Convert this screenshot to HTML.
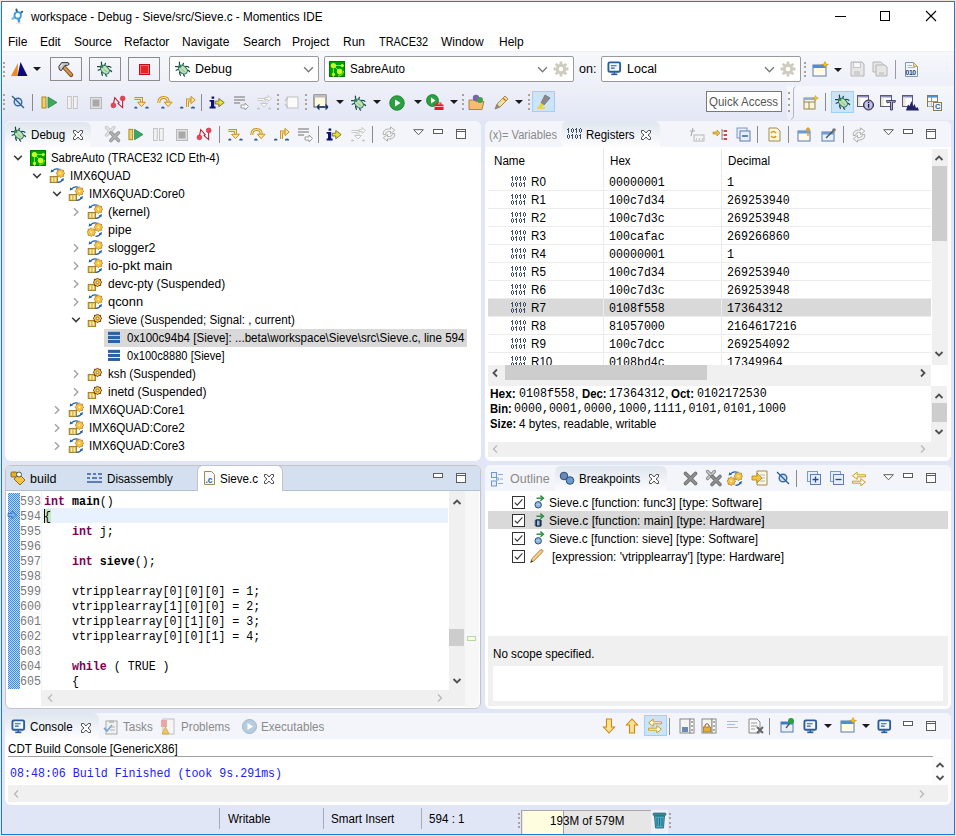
<!DOCTYPE html>
<html><head><meta charset="utf-8">
<style>
*{box-sizing:border-box}
html,body{margin:0;padding:0}
body{width:956px;height:836px;position:relative;overflow:hidden;background:#ebe6df;font-family:"Liberation Sans",sans-serif;font-size:12px;color:#000}
.a{position:absolute}
svg.a{overflow:visible}
.t{position:absolute;white-space:nowrap;line-height:14px;transform-origin:0 0}
.n{transform:scaleX(.93)}
.m{font-family:"Liberation Mono",monospace}
.mc{font-family:"Liberation Mono",monospace;font-size:12.5px;transform:scaleX(.93)}
#win{left:1px;top:1px;width:954px;height:834px;border:1px solid #1a7ad4;background:#e1e6f6}
.panel{position:absolute;background:#fff;border-radius:6px;overflow:hidden}
.tabbar{position:absolute;left:0;top:0;right:0;height:26px;background:#f3f5fa}
.tabsel{position:absolute;top:0;height:26px;background:linear-gradient(#dfe6ee,#fdfdfe);border-radius:6px 6px 0 0}
.box{position:absolute;border:1px solid #8c8c8c}
.combo{position:absolute;border:1px solid #9a9a9a;background:#fff;border-radius:2px}
.dd{position:absolute;width:0;height:0;border-left:4px solid transparent;border-right:4px solid transparent;border-top:4px solid #1a1a1a}
.grip{position:absolute;width:2px;background:repeating-linear-gradient(#a8a49a 0 2px,transparent 2px 4.5px)}
.mini{position:absolute;width:10px;height:5px;border:1px solid #5c5c5c;background:#fff}
.maxi{position:absolute;width:10px;height:10px;border:1px solid #5c5c5c;background:#fff;box-shadow:inset 0 1px 0 #fff,inset 0 2px 0 #5c5c5c}
.sep{position:absolute;width:1px;background:#8a8a8a}
</style></head><body>
<div id="win" class="a"></div>
<!-- title/menu bg -->
<div class="a" style="left:2px;top:2px;width:952px;height:49px;background:#fff"></div>
<div class="a" style="left:2px;top:51px;width:952px;height:1px;background:#f0f0f0"></div>
<div class="a" style="left:2px;top:52px;width:952px;height:69px;background:linear-gradient(#f7f8fc,#e3e7f5)"></div>
<!-- ===== TITLE BAR ===== -->
<svg class="a" style="left:8px;top:5px" width="22" height="22" viewBox="0 0 22 22"><path d="M8.4 4.5L9.4 8M14.2 6.7L11.8 8.5" stroke="#3a5872" stroke-width="2" stroke-linecap="round"/><path d="M4.5 13.8L7.5 11.5" stroke="#8cc4ee" stroke-width="2.6" stroke-linecap="round"/><path d="M11 16.5L10.6 13.5" stroke="#4a9ae0" stroke-width="2.6" stroke-linecap="round"/><circle cx="9.7" cy="10.4" r="3.2" fill="#fff" stroke="#3a9ae2" stroke-width="1.8"/><ellipse cx="10.5" cy="18.5" rx="3" ry="0.8" fill="#e4e4e4"/></svg>
<div class="t" style="left:31px;top:10px;font-size:12px;transform:scaleX(.978)">workspace - Debug - Sieve/src/Sieve.c - Momentics IDE</div>
<div class="a" style="left:835px;top:16px;width:11px;height:1px;background:#000"></div>
<div class="a" style="left:880px;top:11px;width:10px;height:10px;border:1px solid #000"></div>
<svg class="a" style="left:925px;top:10px" width="12" height="12" viewBox="0 0 12 12"><path d="M1 1L11 11M11 1L1 11" stroke="#000" stroke-width="1.1"/></svg>
<!-- ===== MENU ===== -->
<div class="t" style="left:8px;top:35px">File</div>
<div class="t" style="left:40px;top:35px">Edit</div>
<div class="t" style="left:74px;top:35px">Source</div>
<div class="t" style="left:124px;top:35px">Refactor</div>
<div class="t" style="left:182px;top:35px">Navigate</div>
<div class="t" style="left:243px;top:35px">Search</div>
<div class="t" style="left:292px;top:35px">Project</div>
<div class="t" style="left:343px;top:35px">Run</div>
<div class="t" style="left:379px;top:35px;transform:scaleX(.91)">TRACE32</div>
<div class="t" style="left:441px;top:35px">Window</div>
<div class="t" style="left:499px;top:35px">Help</div>
<svg width="0" height="0" style="position:absolute">
<defs>
<symbol id="bug" viewBox="0 0 16 16"><g stroke="#1c4a3c" stroke-width="1.25" stroke-linecap="round" fill="none"><path d="M4.4 1.1L4.6 4M8.4 2.4L7.4 5M0.4 5.5H3.5M10.5 5.3L12.6 5.5L13.8 6.3M1.2 9.3L3.5 8.3M12.2 9.1L13.6 9.5L14.5 10.5M4.6 11.4L4.9 13L5.4 14.3M8.6 13L8.8 14.3L9.6 15.2"/></g><ellipse cx="7.9" cy="8.6" rx="3.6" ry="5.1" transform="rotate(-45 7.9 8.6)" fill="#bfe0b0" stroke="#226a70" stroke-width="1"/><path d="M6.5 8.2L10 11" stroke="#8cc080" stroke-width="1"/><circle cx="4.8" cy="5.4" r="1.4" fill="#3e8a50" stroke="#226a70" stroke-width=".6"/></symbol>
<symbol id="gear" viewBox="0 0 16 16"><g fill="#cfcbbf"><circle cx="8" cy="8" r="5.2"/><rect x="6.6" y="0.5" width="2.8" height="15" rx="0.6"/><rect x="0.5" y="6.6" width="15" height="2.8" rx="0.6"/><rect x="6.6" y="0.5" width="2.8" height="15" rx="0.6" transform="rotate(45 8 8)"/><rect x="6.6" y="0.5" width="2.8" height="15" rx="0.6" transform="rotate(-45 8 8)"/></g><circle cx="8" cy="8" r="2.3" fill="#fff"/></symbol>
<symbol id="chev" viewBox="0 0 12 8"><path d="M1 1.5L6 6.5L11 1.5" fill="none" stroke="#7a7a7a" stroke-width="1.6"/></symbol>
<symbol id="mon" viewBox="0 0 16 16"><rect x="1.5" y="1.5" width="12.5" height="10" rx="1.5" fill="#f4f8fc" stroke="#2b5c9c" stroke-width="2"/><path d="M4.2 5h6M4.2 7.6h4" stroke="#2b5c9c" stroke-width="1.2"/><path d="M4.5 14.2h6.5" stroke="#2b5c9c" stroke-width="1.8"/><path d="M7.75 12v2" stroke="#2b5c9c" stroke-width="1.5"/></symbol>
<symbol id="sabre" viewBox="0 0 16 16"><rect x="0" y="0" width="16" height="16" fill="#007a00"/><rect x="1" y="1" width="14" height="14" fill="#00a000"/><path d="M4.4 4.5H15M4.4 4.5V16M4.4 4.5L10.6 10.5" stroke="#66ff22" stroke-width="1"/><path d="M9 15Q14 15 14.5 10" fill="none" stroke="#77ff33" stroke-width="1"/><circle cx="4.4" cy="4.5" r="2.6" fill="#c6ff2a"/><circle cx="10.6" cy="10.6" r="2.8" fill="#c6ff2a"/><circle cx="13.2" cy="4.6" r="1.6" fill="#b8ff30"/><circle cx="4.5" cy="13.4" r="1.6" fill="#b8ff30"/></symbol>
<symbol id="proc" viewBox="0 0 17 16"><rect x="1.2" y="9.4" width="7.4" height="6.2" fill="#d9b445" stroke="#9a7a22" stroke-width=".9"/><rect x="2.6" y="10.6" width="1.6" height="4" fill="#fbeeb0"/><rect x="5.6" y="10.6" width="1.6" height="4" fill="#fbeeb0"/><path d="M15.90,6.30 L14.45,7.56 L14.58,9.48 L12.66,9.35 L11.40,10.80 L10.14,9.35 L8.22,9.48 L8.35,7.56 L6.90,6.30 L8.35,5.04 L8.22,3.12 L10.14,3.25 L11.40,1.80 L12.66,3.25 L14.58,3.12 L14.45,5.04Z" fill="#f7c23a" stroke="#a8782a" stroke-width=".7"/><circle cx="11.4" cy="6.3" r="1" fill="#fff6d0"/><path d="M10.5 2.3Q6.5 0.8 3.6 3.8" fill="none" stroke="#1f5ea8" stroke-width="1.2"/><path d="M1.6 5.4L2.4 2.2L5 4.4Z" fill="#1f5ea8"/><path d="M8.5 15.3Q12 15.5 13.6 12.6" fill="none" stroke="#1f5ea8" stroke-width="1.2"/><path d="M15 11L11.8 12.4L14.3 14.3Z" fill="#1f5ea8"/></symbol>
<symbol id="procs" viewBox="0 0 17 16"><rect x="1.2" y="9.4" width="7.4" height="6.2" fill="#d9b445" stroke="#9a7a22" stroke-width=".9"/><rect x="2.6" y="10.6" width="1.6" height="4" fill="#fbeeb0"/><rect x="5.6" y="10.6" width="1.6" height="4" fill="#fbeeb0"/><path d="M15.00,7.40 L13.55,8.66 L13.68,10.58 L11.76,10.45 L10.50,11.90 L9.24,10.45 L7.32,10.58 L7.45,8.66 L6.00,7.40 L7.45,6.14 L7.32,4.22 L9.24,4.35 L10.50,2.90 L11.76,4.35 L13.68,4.22 L13.55,6.14Z" fill="#f7c23a" stroke="#5a3a12" stroke-width=".9"/><circle cx="10.5" cy="7.4" r="1.3" fill="#fff" stroke="#5a3a12" stroke-width=".6"/></symbol>
<symbol id="proc2" viewBox="0 0 17 16"><path d="M8.70,11.20 L7.25,12.46 L7.38,14.38 L5.46,14.25 L4.20,15.70 L2.94,14.25 L1.02,14.38 L1.15,12.46 L-0.30,11.20 L1.15,9.94 L1.02,8.02 L2.94,8.15 L4.20,6.70 L5.46,8.15 L7.38,8.02 L7.25,9.94Z" fill="#f7c23a" stroke="#a8782a" stroke-width=".7"/><circle cx="4.2" cy="11.2" r="1" fill="#fff6d0"/><path d="M15.90,6.30 L14.45,7.56 L14.58,9.48 L12.66,9.35 L11.40,10.80 L10.14,9.35 L8.22,9.48 L8.35,7.56 L6.90,6.30 L8.35,5.04 L8.22,3.12 L10.14,3.25 L11.40,1.80 L12.66,3.25 L14.58,3.12 L14.45,5.04Z" fill="#f7c23a" stroke="#a8782a" stroke-width=".7"/><circle cx="11.4" cy="6.3" r="1" fill="#fff6d0"/><path d="M10.5 2.3Q6.5 0.8 3.6 3.8" fill="none" stroke="#1f5ea8" stroke-width="1.2"/><path d="M1.6 5.4L2.4 2.2L5 4.4Z" fill="#1f5ea8"/><path d="M8.5 15.3Q12 15.5 13.6 12.6" fill="none" stroke="#1f5ea8" stroke-width="1.2"/><path d="M15 11L11.8 12.4L14.3 14.3Z" fill="#1f5ea8"/></symbol>
<symbol id="frame" viewBox="0 0 14 16"><g fill="#2a64aa"><rect x="1" y="1.8" width="12" height="2.8"/><rect x="1" y="5.9" width="12" height="2.8"/><rect x="1" y="9.9" width="12" height="2.8"/></g><g fill="#1e5090"><rect x="1" y="3.8" width="12" height=".8"/><rect x="1" y="7.9" width="12" height=".8"/><rect x="1" y="11.9" width="12" height=".8"/></g></symbol>
<symbol id="bin" viewBox="0 0 16 15"><g fill="#3c4c68" shape-rendering="crispEdges"><path d="M2 1h1v5h-1zM1 2h1v1h-1z"/><path d="M5 2h1v3h-1zM7 2h1v3h-1zM6 1h1v1h-1zM6 5h1v1h-1z"/><path d="M10 1h1v5h-1zM9 2h1v1h-1z"/><path d="M13 2h1v3h-1zM15 2h1v3h-1zM14 1h1v1h-1zM14 5h1v1h-1z"/><path d="M1 8h1v3h-1zM3 8h1v3h-1zM2 7h1v1h-1zM2 11h1v1h-1z"/><path d="M6 7h1v5h-1zM5 8h1v1h-1z"/><path d="M9 8h1v3h-1zM11 8h1v3h-1zM10 7h1v1h-1zM10 11h1v1h-1z"/><path d="M14 7h1v5h-1zM13 8h1v1h-1z"/></g></symbol>
<symbol id="xclose" viewBox="0 0 12 12"><path d="M1.5 1.5H3.8L6 4L8.2 1.5H10.5V3.8L8 6L10.5 8.2V10.5H8.2L6 8L3.8 10.5H1.5V8.2L4 6L1.5 3.8Z" fill="#fff" stroke="#505050" stroke-width="1"/></symbol>
<symbol id="menu" viewBox="0 0 11 7"><path d="M0.7 0.7h9.6L5.5 5.8Z" fill="#fff" stroke="#5c5c5c" stroke-width="1"/></symbol>
<symbol id="mini" viewBox="0 0 12 6"><rect x="1" y="1" width="10" height="4" fill="#fff" stroke="#444" stroke-width="1.2"/></symbol>
<symbol id="maxi" viewBox="0 0 12 12"><rect x="1" y="1" width="10" height="10" fill="#fff" stroke="#444" stroke-width="1.2"/><path d="M1 3.2h10" stroke="#444" stroke-width="1.2"/></symbol>
<symbol id="refresh" viewBox="0 0 16 16"><path d="M3 9Q2 3 9 3L9 1L13 4.5L9 8L9 6Q5 6 5 9Z" fill="#ddd" stroke="#999" stroke-width=".9"/><path d="M13 7Q14 13 7 13L7 15L3 11.5L7 8L7 10Q11 10 11 7Z" fill="#ddd" stroke="#999" stroke-width=".9"/></symbol>
<symbol id="chk" viewBox="0 0 14 14"><rect x="0.5" y="0.5" width="12" height="12" fill="#fff" stroke="#333" stroke-width="1"/><path d="M2.8 6.6L5.2 9.2L10.4 3.4" fill="none" stroke="#3a3a3a" stroke-width="1.2"/></symbol>
<symbol id="tarrow" viewBox="0 0 10 10"><path d="M3 1.2L6.8 5L3 8.8" fill="none" stroke="#a4a4a4" stroke-width="1.5"/></symbol>
<symbol id="darrow" viewBox="0 0 10 10"><path d="M1.2 2.8L5 6.6L8.8 2.8" fill="none" stroke="#3c3c3c" stroke-width="1.6"/></symbol>
<symbol id="disc" viewBox="0 0 16 15"><path d="M3.4 9L4.8 2.6L9.2 7.6L8 8.6L12.6 12.6L12.7 5" fill="none" stroke="#b8202e" stroke-width="1.1"/><circle cx="3.4" cy="10.4" r="2.4" fill="#ec4453" stroke="#c02a38" stroke-width=".6"/><circle cx="12.7" cy="3.4" r="2.4" fill="#ec4453" stroke="#c02a38" stroke-width=".6"/></symbol>
<symbol id="sinto" viewBox="0 0 17 15"><path d="M1.5 3.5H8.5V8" fill="none" stroke="#c8901a" stroke-width="3"/><path d="M1.5 3.5H8.5V8" fill="none" stroke="#fde9a8" stroke-width="1.2"/><path d="M4.6 7.2H12.4L8.5 11.6Z" fill="#fde9a8" stroke="#c8901a" stroke-width="1"/><path d="M1.3 13.6V12.6Q2.8 10.4 4.3 12.6V13.6ZM12.3 13.6V12.6Q14 10.4 15.7 12.6V13.6Z" fill="#2c5a8c"/></symbol>
<symbol id="sover" viewBox="0 0 17 15"><path d="M1.8 8Q1.8 2.5 6.5 2.5Q11.2 2.5 11.2 7" fill="none" stroke="#c8901a" stroke-width="3"/><path d="M1.8 8Q1.8 2.5 6.5 2.5Q11.2 2.5 11.2 7" fill="none" stroke="#fde9a8" stroke-width="1.2"/><path d="M7.3 7.2H15.1L11.2 11.6Z" fill="#fde9a8" stroke="#c8901a" stroke-width="1"/><path d="M4.2 13.6V12.6Q5.9 10.4 7.6 12.6V13.6Z" fill="#2c5a8c"/></symbol>
<symbol id="sret" viewBox="0 0 17 15"><path d="M8.5 12V5H12.5" fill="none" stroke="#c8901a" stroke-width="3"/><path d="M8.5 12V5H12.5" fill="none" stroke="#fde9a8" stroke-width="1.2"/><path d="M12 1.4V8.6L16.2 5Z" fill="#fde9a8" stroke="#c8901a" stroke-width="1"/><path d="M1 13.6V12.6Q2.7 10.4 4.4 12.6V13.6ZM12 13.6V12.6Q14 10.4 16 12.6V13.6Z" fill="#2c5a8c"/></symbol>
<symbol id="iarr" viewBox="0 0 16 13"><path d="M2.6 0.4h2.6v2.4H2.6Z M0.6 4h4.6v6.6h1.4v1.8H0.6v-1.8h1.4V5.8H0.6Z" fill="#10107a"/><path d="M6.2 5.2h3.6V2.4L15.2 6.6L9.8 10.8V8H6.2Z" fill="#e6dc3c" stroke="#6a6418" stroke-width=".8"/></symbol>
<symbol id="dsel" viewBox="0 0 16 15"><path d="M1.5 4.5H8V9" fill="none" stroke="#c8c8c8" stroke-width="2.8"/><path d="M1.5 4.5H8V9" fill="none" stroke="#fafafa" stroke-width="1"/><path d="M4.5 8.5H11.5L8 12Z" fill="#fafafa" stroke="#c4c4c4" stroke-width=".9"/><path d="M9 2.5H12V0.5L15.5 3.5L12 6.5V4.5H9Z" fill="#fafafa" stroke="#c4c4c4" stroke-width=".9"/><path d="M1 14.2V13.4Q2.5 11.6 4 13.4V14.2ZM12 14.2V13.4Q13.5 11.6 15 13.4V14.2Z" fill="#c4c4c4"/></symbol>
<symbol id="refr" viewBox="0 0 16 16"><path d="M2.2 8.5Q1.8 3.2 7.5 3H9.5V0.8L13.8 4.2L9.5 7.6V5.4H7.5Q4.4 5.6 4.6 8.5Z" fill="#f4f4f4" stroke="#a8a8a8" stroke-width=".9"/><path d="M13.8 7.5Q14.2 12.8 8.5 13H6.5V15.2L2.2 11.8L6.5 8.4V10.6H8.5Q11.6 10.4 11.4 7.5Z" fill="#f4f4f4" stroke="#a8a8a8" stroke-width=".9"/></symbol>
<symbol id="link" viewBox="0 0 16 16"><path d="M14.5 4.8H6.2V2.2L1.6 5.8L6.2 9.4V6.8H14.5Z" fill="#fffdf2" stroke="#d09a20" stroke-width="1" stroke-linejoin="round"/><path d="M1.5 11.2H9.8V8.6L14.4 12.2L9.8 15.8V13.2H1.5Z" fill="#fffdf2" stroke="#d09a20" stroke-width="1" stroke-linejoin="round"/></symbol>
</defs></svg>

<!-- ===== TOOLBAR ROW 1 ===== -->
<div class="grip" style="left:3px;top:62px;height:16px"></div>
<svg class="a" style="left:11px;top:62px" width="17" height="15" viewBox="0 0 17 15"><path d="M0 14L7 1L6.5 14Z" fill="#f08a20"/><path d="M6.5 14L9.5 0L16.5 14Z" fill="#0a0a7a"/></svg>
<div class="dd" style="left:33px;top:67px"></div>
<div class="box" style="left:50px;top:57px;width:32px;height:24px"></div>
<svg class="a" style="left:58px;top:61px" width="16" height="16" viewBox="0 0 16 16"><path d="M6.4 6.6L13.2 14" stroke="#8a5418" stroke-width="4.2" stroke-linecap="round"/><path d="M6.6 6.8L13 13.8" stroke="#d49a58" stroke-width="2.2" stroke-linecap="round"/><path d="M3.6 1.6H10.2L11.2 3.2L9.6 4.4H7L5.4 6.4L3.4 9.6L1.4 8.8L0.8 5.6Z" fill="#c8c8c8" stroke="#343434" stroke-width="1" stroke-linejoin="round"/><path d="M4 3.5L2.5 6" stroke="#f0f0f0" stroke-width="1"/></svg>
<div class="box" style="left:89px;top:57px;width:32px;height:24px"></div>
<svg class="a" style="left:97px;top:61px" width="16" height="16"><use href="#bug"/></svg>
<div class="box" style="left:128px;top:57px;width:32px;height:24px"></div>
<div class="a" style="left:139px;top:64px;width:11px;height:11px;background:#e8202a;border:1px solid #c01018;box-shadow:inset 0 0 0 1px #ff6a70"></div>

<div class="combo" style="left:169px;top:56px;width:150px;height:26px"></div>
<svg class="a" style="left:175px;top:61px" width="16" height="16"><use href="#bug"/></svg>
<div class="t" style="left:195px;top:62px;font-size:12.5px">Debug</div>
<svg class="a" style="left:303px;top:66px" width="11" height="7"><use href="#chev"/></svg>

<div class="combo" style="left:324px;top:56px;width:250px;height:26px"></div>
<svg class="a" style="left:329px;top:61px" width="16" height="16"><use href="#sabre"/></svg>
<div class="t n" style="left:350px;top:62px;font-size:12.5px">SabreAuto</div>
<svg class="a" style="left:537px;top:66px" width="11" height="7"><use href="#chev"/></svg>
<svg class="a" style="left:553px;top:61px" width="16" height="16"><use href="#gear"/></svg>
<div class="t" style="left:579px;top:62px;font-size:12.5px">on:</div>

<div class="combo" style="left:601px;top:56px;width:200px;height:26px"></div>
<svg class="a" style="left:607px;top:61px" width="15" height="15"><use href="#mon"/></svg>
<div class="t" style="left:627px;top:62px;font-size:12.5px">Local</div>
<svg class="a" style="left:764px;top:66px" width="11" height="7"><use href="#chev"/></svg>
<svg class="a" style="left:780px;top:61px" width="16" height="16"><use href="#gear"/></svg>

<div class="grip" style="left:804px;top:62px;height:17px"></div>
<svg class="a" style="left:812px;top:61px" width="17" height="16" viewBox="0 0 17 16"><rect x="1" y="4" width="13" height="11" fill="#fffbe8" stroke="#5a7ca8" stroke-width="1"/><rect x="1" y="4" width="13" height="3" fill="#4a8fd8"/><path d="M13 0.5L14 3L16.5 3.5L14 4.5L13 7L12 4.5L9.5 3.5L12 3Z" fill="#f5c518" stroke="#b8860b" stroke-width=".5"/></svg>
<div class="dd" style="left:834px;top:68px"></div>
<svg class="a" style="left:850px;top:61px" width="15" height="16" viewBox="0 0 15 16"><path d="M1 1h11l2 2v12H1Z" fill="#e6e6e6" stroke="#b4b4b4"/><rect x="3.5" y="1.5" width="7" height="5" fill="#f6f6f6" stroke="#bbb" stroke-width=".8"/><rect x="4" y="10" width="6" height="5" fill="#cfcfcf"/></svg>
<svg class="a" style="left:872px;top:61px" width="16" height="16" viewBox="0 0 16 16"><path d="M1 1h8l2 2v8H1Z" fill="#e6e6e6" stroke="#b4b4b4"/><path d="M4 4h9l2 2v9H4Z" fill="#e6e6e6" stroke="#b4b4b4"/><rect x="7" y="11" width="5" height="4" fill="#cfcfcf"/></svg>
<div class="sep" style="left:895px;top:60px;height:19px;background:#9a9a9a"></div>
<svg class="a" style="left:904px;top:61px" width="15" height="16" viewBox="0 0 15 16"><path d="M1.5 1.5H9.5L13.5 5.5V15.5H1.5Z" fill="#f4f8fc" stroke="#7c94b8" stroke-width="1"/><path d="M9.5 1.5V5.5H13.5Z" fill="#f0d890" stroke="#b89a50" stroke-width=".8"/><path d="M3.5 4.5H8M3.5 6.5H11" stroke="#a8b8d0" stroke-width="1"/><text x="1.6" y="14.4" font-family="Liberation Sans" font-weight="bold" font-size="6.8" fill="#1a3a78" letter-spacing="-.4">010</text></svg>

<!-- ===== TOOLBAR ROW 2 ===== -->
<div class="grip" style="left:3px;top:94px;height:16px"></div>
<svg class="a" style="left:11px;top:95px" width="14" height="14" viewBox="0 0 14 14"><circle cx="7" cy="7" r="3.8" fill="#cfe0f0" stroke="#3a6aa8" stroke-width="1.4"/><path d="M1 1L13 13" stroke="#2a5a98" stroke-width="1.3"/></svg>
<div class="sep" style="left:32px;top:94px;height:17px"></div>
<svg class="a" style="left:41px;top:96px" width="17" height="13" viewBox="0 0 17 13"><rect x="1" y="1" width="4" height="11" fill="#f0d060" stroke="#a88a20" stroke-width="1"/><path d="M7 1L16 6.5L7 12Z" fill="#3aa860" stroke="#2a8a48" stroke-width=".8"/></svg>
<svg class="a" style="left:67px;top:96px" width="11" height="13" viewBox="0 0 11 13"><rect x="0.5" y="0.5" width="3.8" height="12" fill="#f2f2f2" stroke="#c4c4c4"/><rect x="6.5" y="0.5" width="3.8" height="12" fill="#f2f2f2" stroke="#c4c4c4"/></svg>
<svg class="a" style="left:90px;top:97px" width="12" height="12" viewBox="0 0 12 12"><rect x="0.5" y="0.5" width="11" height="11" fill="#e2e2e2" stroke="#b8b8b8"/><rect x="2.5" y="2.5" width="7" height="7" fill="#a8a8a8"/></svg>
<svg class="a" style="left:110px;top:95px" width="16" height="15"><use href="#disc"/></svg>
<svg class="a" style="left:133px;top:95px" width="17" height="15"><use href="#sinto"/></svg>
<svg class="a" style="left:157px;top:95px" width="17" height="15"><use href="#sover"/></svg>
<svg class="a" style="left:179px;top:95px" width="17" height="15"><use href="#sret"/></svg>
<div class="sep" style="left:201px;top:94px;height:17px"></div>
<svg class="a" style="left:209px;top:96px" width="16" height="13"><use href="#iarr"/></svg>
<svg class="a" style="left:233px;top:95px" width="16" height="16" viewBox="0 0 16 16"><path d="M1 2h11M1 5h11M1 8h6" stroke="#9a9a9a" stroke-width="1.6"/><path d="M8 10h4V8l3.5 3.5L12 15v-2H8Z" fill="#fff" stroke="#9a9a9a" stroke-width="1"/></svg>
<svg class="a" style="left:256px;top:95px" width="16" height="15"><use href="#dsel"/></svg>
<div class="grip" style="left:277px;top:94px;height:17px"></div>
<svg class="a" style="left:284px;top:96px" width="15" height="13" viewBox="0 0 15 13"><rect x="3" y="1" width="11" height="11" fill="#fafafa" stroke="#c0c0c0"/><path d="M1 5l3-3M1 8l3 3" stroke="#c0c0c0" stroke-width="1.2"/></svg>
<div class="grip" style="left:305px;top:94px;height:17px"></div>
<svg class="a" style="left:313px;top:94px" width="17" height="17" viewBox="0 0 17 17"><rect x="1" y="1" width="12" height="12" fill="#fdf8e0" stroke="#555" stroke-width="1"/><rect x="1" y="1" width="12" height="2.5" fill="#bbb"/><path d="M4 13h11M4 13l2.5-2.5M4 13l2.5 2.5M15 13l-2.5-2.5M15 13l-2.5 2.5" stroke="#1a3060" stroke-width="1.3" fill="none"/></svg>
<div class="dd" style="left:336px;top:100px"></div>
<svg class="a" style="left:351px;top:95px" width="16" height="16"><use href="#bug"/></svg>
<div class="dd" style="left:373px;top:100px"></div>
<svg class="a" style="left:389px;top:95px" width="16" height="16" viewBox="0 0 16 16"><circle cx="8" cy="8" r="7.3" fill="#2aa040" stroke="#1a7a2a" stroke-width=".8"/><path d="M6 4.5L11.5 8L6 11.5Z" fill="#fff"/></svg>
<div class="dd" style="left:414px;top:100px"></div>
<svg class="a" style="left:426px;top:94px" width="18" height="17" viewBox="0 0 18 17"><circle cx="6.5" cy="6.5" r="6" fill="#2aa040" stroke="#1a7a2a" stroke-width=".8"/><path d="M5 3.5L9.5 6.5L5 9.5Z" fill="#fff"/><rect x="8.5" y="10.5" width="9" height="5.5" fill="#e02020"/><rect x="11" y="9" width="4" height="2" fill="none" stroke="#e02020" stroke-width="1"/><path d="M8.5 12.5h9" stroke="#fff" stroke-width=".7"/></svg>
<div class="dd" style="left:450px;top:100px"></div>
<div class="grip" style="left:462px;top:94px;height:17px"></div>
<svg class="a" style="left:468px;top:94px" width="18" height="17" viewBox="0 0 18 17"><path d="M1 6h6l1 1.5h8l-2 8H1Z" fill="#f0c070" stroke="#b07a20" stroke-width=".9"/><circle cx="8" cy="4" r="3.2" fill="#7a60b0"/><circle cx="12" cy="6" r="3" fill="#40a050"/></svg>
<svg class="a" style="left:493px;top:94px" width="16" height="17" viewBox="0 0 16 17"><path d="M2 15L4 10L12 2L15 5L7 13Z" fill="#f0e0a0" stroke="#a08040" stroke-width=".9"/><path d="M2 15L4 10L7 13Z" fill="#888"/><path d="M10 4l3 3" stroke="#d08020" stroke-width="1.5"/></svg>
<div class="dd" style="left:515px;top:100px"></div>
<div class="grip" style="left:528px;top:94px;height:17px"></div>
<div class="a" style="left:532px;top:91px;width:23px;height:21px;background:#cce4f7;border:1px solid #99d1ff"></div>
<svg class="a" style="left:536px;top:93px" width="16" height="16" viewBox="0 0 16 16"><path d="M9 2L14 5L8 12L5 10Z" fill="#8a8a8a" stroke="#666" stroke-width=".7"/><path d="M5 10L8 12L6 14L2 14.5Z" fill="#f5d020"/><path d="M1 15h8" stroke="#f5d020" stroke-width="1.5"/></svg>

<div class="a" style="left:706px;top:91px;width:76px;height:21px;background:#fff;border:1px solid #7a7a7a"></div>
<div class="t" style="left:709px;top:95px;font-size:12.5px;color:#555;transform:scaleX(.92)">Quick Access</div>
<div class="a" style="left:787px;top:86px;width:167px;height:34px;background:linear-gradient(#f6f7fc,#eceff8)"></div>
<div class="a" style="left:788px;top:92px;width:2px;height:21px;background:repeating-linear-gradient(#a8a290 0 2px,transparent 2px 6px)"></div>
<svg class="a" style="left:790px;top:86px" width="8" height="34" viewBox="0 0 8 34"><path d="M5.5 0.5Q3.5 1.5 3.5 4V30Q3.5 32.5 1 33.5" fill="none" stroke="#b4b8c6" stroke-width="1"/></svg>
<svg class="a" style="left:803px;top:95px" width="16" height="15" viewBox="0 0 16 15"><rect x="1" y="3" width="11" height="11" fill="#fdf4d8" stroke="#8a7a4a" stroke-width=".9"/><path d="M1 7h11M6 7v7" stroke="#8a7a4a" stroke-width=".9"/><rect x="1" y="3" width="11" height="2" fill="#8cb0d8"/><path d="M12.5 0.5l1 2 2 .6-2 .8-1 2-.9-2-2-.8 2-.6Z" fill="#f5c518" stroke="#b8860b" stroke-width=".4"/></svg>
<div class="sep" style="left:825px;top:93px;height:18px"></div>
<div class="a" style="left:831px;top:91px;width:23px;height:22px;background:#cce4f7;border:1px solid #99d1ff"></div>
<svg class="a" style="left:835px;top:94px" width="16" height="16"><use href="#bug"/></svg>
<svg class="a" style="left:857px;top:94px" width="18" height="17" viewBox="0 0 18 17"><rect x="0.5" y="1.5" width="11" height="11" fill="#fff" stroke="#5a5a78" stroke-width="1"/><rect x="1" y="2" width="10" height="1.5" fill="#8c8cc0"/><rect x="1" y="3.5" width="2.5" height="8.5" fill="#ece8cc"/><circle cx="11.5" cy="11" r="5" fill="#8a8ab8" stroke="#2a2a4a" stroke-width="1"/><circle cx="11.5" cy="11" r="3.6" fill="#c8c8e8"/><rect x="10.9" y="10" width="1.4" height="3.6" fill="#1a1a3a"/><rect x="10.9" y="7.9" width="1.4" height="1.3" fill="#1a1a3a"/></svg>
<svg class="a" style="left:880px;top:94px" width="17" height="17" viewBox="0 0 17 17"><rect x="0.5" y="1.5" width="11" height="11" fill="#fff" stroke="#5a5a78" stroke-width="1"/><rect x="1" y="2" width="10" height="1.5" fill="#8c8cc0"/><rect x="1" y="3.5" width="2.5" height="8.5" fill="#ece8cc"/><path d="M6.5 6.5H15.5L15 8.5L12.5 8V16H10.5V8L7 8.8Z" fill="#b0a8d0" stroke="#3a3460" stroke-width=".9" stroke-linejoin="round"/></svg>
<svg class="a" style="left:902px;top:94px" width="18" height="17" viewBox="0 0 18 17"><rect x="0.5" y="1.5" width="10" height="11" fill="#fff" stroke="#5a5a78" stroke-width="1"/><rect x="1" y="2" width="9" height="1.5" fill="#8c8cc0"/><rect x="1" y="3.5" width="2.5" height="8.5" fill="#ece8cc"/><path d="M4 16.5L6 10.5L7.5 12L9.5 7L11 12.5L12.5 10L14 14L15.5 13L17 16.5Z" fill="#222266"/></svg>
<svg class="a" style="left:926px;top:94px" width="17" height="17" viewBox="0 0 17 17"><rect x="1.5" y="1.5" width="10" height="11" fill="#fff" stroke="#8a7a4a" stroke-width="1"/><rect x="2" y="2" width="9" height="1.6" fill="#4a90d8"/><path d="M2 7.5H11M5.5 3.5V12.5" stroke="#8a7a4a" stroke-width=".8"/><rect x="2" y="8" width="3.5" height="4.5" fill="#dff0ff"/><rect x="7.5" y="8.5" width="8" height="8" fill="#eaf4ff" stroke="#8a7a4a" stroke-width="1"/><text x="9" y="15.3" font-family="Liberation Sans" font-weight="bold" font-size="7.5" fill="#2a60a8">C</text></svg>
<!-- panels -->
<div class="panel" style="left:5px;top:121px;width:476px;height:340px"><div class="tabbar"></div></div>
<div class="panel" style="left:485px;top:121px;width:466px;height:340px"><div class="tabbar"></div></div>
<div class="panel" style="left:5px;top:465px;width:476px;height:244px;border:1px solid #c4c4c4"><div class="tabbar" style="background:#d4e0ef;height:25px;border-bottom:1px solid #b4c2d4"></div></div>
<div class="panel" style="left:485px;top:465px;width:466px;height:244px"><div class="tabbar"></div></div>
<div class="panel" style="left:5px;top:713px;width:946px;height:92px"><div class="tabbar"></div></div>
<!-- ===== DEBUG PANEL ===== -->
<div class="tabsel" style="left:5px;top:122px;width:86px"></div>
<svg class="a" style="left:11px;top:126px" width="16" height="16"><use href="#bug"/></svg>
<div class="t n" style="left:31px;top:128px;font-size:12.5px">Debug</div>
<svg class="a" style="left:72px;top:129px" width="12" height="12"><use href="#xclose"/></svg>
<!-- debug toolbar -->
<svg class="a" style="left:104px;top:125px" width="18" height="18" viewBox="0 0 18 18"><path d="M2.5 2.5L10 10M10 2.5L2.5 10" stroke="#c8c8c8" stroke-width="3.4" stroke-linecap="round"/><path d="M2.5 2.5L10 10M10 2.5L2.5 10" stroke="#e4e4e4" stroke-width="1.6" stroke-linecap="round"/><path d="M6.8 7.8L14.5 15.5M14.5 7.8L6.8 15.5" stroke="#9a9a9a" stroke-width="3.6" stroke-linecap="round"/><path d="M6.8 7.8L14.5 15.5M14.5 7.8L6.8 15.5" stroke="#b4b4b4" stroke-width="1.6" stroke-linecap="round"/></svg>
<svg class="a" style="left:128px;top:128px" width="16" height="13" viewBox="0 0 17 13"><rect x="1" y="1" width="4" height="11" fill="#f0d060" stroke="#a88a20" stroke-width="1"/><path d="M7 1L16 6.5L7 12Z" fill="#3aa860" stroke="#2a8a48" stroke-width=".8"/></svg>
<svg class="a" style="left:153px;top:128px" width="11" height="13" viewBox="0 0 11 13"><rect x="0.5" y="0.5" width="3.8" height="12" fill="#f2f2f2" stroke="#c4c4c4"/><rect x="6.5" y="0.5" width="3.8" height="12" fill="#f2f2f2" stroke="#c4c4c4"/></svg>
<svg class="a" style="left:176px;top:129px" width="12" height="12" viewBox="0 0 12 12"><rect x="0.5" y="0.5" width="11" height="11" fill="#e2e2e2" stroke="#b8b8b8"/><rect x="2.5" y="2.5" width="7" height="7" fill="#a8a8a8"/></svg>
<svg class="a" style="left:196px;top:127px" width="16" height="15"><use href="#disc"/></svg>
<div class="sep" style="left:219px;top:126px;height:17px"></div>
<svg class="a" style="left:227px;top:127px" width="17" height="15"><use href="#sinto"/></svg>
<svg class="a" style="left:250px;top:127px" width="17" height="15"><use href="#sover"/></svg>
<svg class="a" style="left:273px;top:127px" width="17" height="15"><use href="#sret"/></svg>
<svg class="a" style="left:297px;top:127px" width="16" height="16" viewBox="0 0 16 16"><path d="M1 2h11M1 5h11M1 8h6" stroke="#9a9a9a" stroke-width="1.6"/><path d="M8 10h4V8l3.5 3.5L12 15v-2H8Z" fill="#fff" stroke="#9a9a9a" stroke-width="1"/></svg>
<div class="sep" style="left:318px;top:126px;height:17px"></div>
<svg class="a" style="left:326px;top:128px" width="16" height="13"><use href="#iarr"/></svg>
<svg class="a" style="left:350px;top:127px" width="16" height="15"><use href="#dsel"/></svg>
<div class="sep" style="left:372px;top:126px;height:17px"></div>
<svg class="a" style="left:381px;top:126px" width="16" height="16"><use href="#refr"/></svg>
<svg class="a" style="left:413px;top:129px" width="11" height="7"><use href="#menu"/></svg>
<div class="mini" style="left:433px;top:129px"></div>
<div class="maxi" style="left:456px;top:129px"></div>
<!-- tree -->
<svg class="a" style="left:13px;top:153px" width="10" height="10"><use href="#darrow"/></svg>
<svg class="a" style="left:30px;top:150px" width="16" height="16"><use href="#sabre"/></svg>
<div class="t" style="left:51px;top:151px;font-size:12.5px;transform:scaleX(.908)">SabreAuto (TRACE32 ICD Eth-4)</div>
<svg class="a" style="left:32px;top:171px" width="10" height="10"><use href="#darrow"/></svg>
<svg class="a" style="left:49px;top:167px" width="17" height="16"><use href="#proc"/></svg>
<div class="t n" style="left:70px;top:169px;font-size:12.5px">IMX6QUAD</div>
<svg class="a" style="left:52px;top:189px" width="10" height="10"><use href="#darrow"/></svg>
<svg class="a" style="left:68px;top:185px" width="17" height="16"><use href="#proc"/></svg>
<div class="t n" style="left:89px;top:187px;font-size:12.5px">IMX6QUAD:Core0</div>

<svg class="a" style="left:71px;top:207px" width="10" height="10"><use href="#tarrow"/></svg>
<svg class="a" style="left:87px;top:203px" width="17" height="16"><use href="#proc"/></svg>
<div class="t" style="left:108px;top:205px;font-size:12.5px;transform:scaleX(0.995)">(kernel)</div>
<svg class="a" style="left:87px;top:221px" width="17" height="16"><use href="#proc2"/></svg>
<div class="t" style="left:108px;top:223px;font-size:12.5px;transform:scaleX(1.000)">pipe</div>
<svg class="a" style="left:71px;top:243px" width="10" height="10"><use href="#tarrow"/></svg>
<svg class="a" style="left:87px;top:239px" width="17" height="16"><use href="#proc"/></svg>
<div class="t" style="left:108px;top:241px;font-size:12.5px;transform:scaleX(0.988)">slogger2</div>
<svg class="a" style="left:71px;top:261px" width="10" height="10"><use href="#tarrow"/></svg>
<svg class="a" style="left:87px;top:257px" width="17" height="16"><use href="#proc"/></svg>
<div class="t" style="left:108px;top:259px;font-size:12.5px;transform:scaleX(1.051)">io-pkt main</div>
<svg class="a" style="left:71px;top:279px" width="10" height="10"><use href="#tarrow"/></svg>
<svg class="a" style="left:87px;top:275px" width="17" height="16"><use href="#procs"/></svg>
<div class="t" style="left:108px;top:277px;font-size:12.5px;transform:scaleX(0.958)">devc-pty (Suspended)</div>
<svg class="a" style="left:71px;top:297px" width="10" height="10"><use href="#tarrow"/></svg>
<svg class="a" style="left:87px;top:293px" width="17" height="16"><use href="#proc"/></svg>
<div class="t" style="left:108px;top:295px;font-size:12.5px;transform:scaleX(1.029)">qconn</div>
<svg class="a" style="left:71px;top:315px" width="10" height="10"><use href="#darrow"/></svg>
<svg class="a" style="left:87px;top:311px" width="17" height="16"><use href="#procs"/></svg>
<div class="t n" style="left:108px;top:313px;font-size:12.5px">Sieve (Suspended; Signal: , current)</div>
<div class="a" style="left:104px;top:329px;width:363px;height:18px;background:#d9d9d9"></div>
<svg class="a" style="left:107px;top:330px" width="14" height="16"><use href="#frame"/></svg>
<div class="t" style="left:127px;top:331px;font-size:12.5px;transform:scaleX(.925)">0x100c94b4 [Sieve]: ...beta\workspace\Sieve\src\Sieve.c, line 594</div>
<svg class="a" style="left:107px;top:348px" width="14" height="16"><use href="#frame"/></svg>
<div class="t" style="left:127px;top:349px;font-size:12.5px;transform:scaleX(0.889)">0x100c8880 [Sieve]</div>
<svg class="a" style="left:71px;top:369px" width="10" height="10"><use href="#tarrow"/></svg>
<svg class="a" style="left:87px;top:365px" width="17" height="16"><use href="#procs"/></svg>
<div class="t n" style="left:108px;top:367px;font-size:12.5px">ksh (Suspended)</div>
<svg class="a" style="left:71px;top:387px" width="10" height="10"><use href="#tarrow"/></svg>
<svg class="a" style="left:87px;top:383px" width="17" height="16"><use href="#procs"/></svg>
<div class="t" style="left:108px;top:385px;font-size:12.5px;transform:scaleX(0.964)">inetd (Suspended)</div>
<svg class="a" style="left:52px;top:405px" width="10" height="10"><use href="#tarrow"/></svg>
<svg class="a" style="left:68px;top:401px" width="17" height="16"><use href="#proc"/></svg>
<div class="t n" style="left:89px;top:403px;font-size:12.5px">IMX6QUAD:Core1</div>
<svg class="a" style="left:52px;top:423px" width="10" height="10"><use href="#tarrow"/></svg>
<svg class="a" style="left:68px;top:419px" width="17" height="16"><use href="#proc"/></svg>
<div class="t n" style="left:89px;top:421px;font-size:12.5px">IMX6QUAD:Core2</div>
<svg class="a" style="left:52px;top:441px" width="10" height="10"><use href="#tarrow"/></svg>
<svg class="a" style="left:68px;top:437px" width="17" height="16"><use href="#proc"/></svg>
<div class="t n" style="left:89px;top:439px;font-size:12.5px">IMX6QUAD:Core3</div>
<!-- ===== REGISTERS PANEL ===== -->
<svg class="a" style="left:489px;top:127px" width="12" height="14" viewBox="0 0 12 14"></svg>
<div class="t" style="left:489px;top:128px;font-size:12.5px;color:#8a8a8a;transform:scaleX(.89)">(x)= Variables</div>
<div class="tabsel" style="left:562px;top:121px;width:98px"></div>
<svg class="a" style="left:566px;top:127px" width="16" height="15"><use href="#bin"/></svg>
<div class="t" style="left:586px;top:128px;font-size:12.5px;transform:scaleX(.92)">Registers</div>
<svg class="a" style="left:640px;top:129px" width="12" height="12"><use href="#xclose"/></svg>
<!-- registers toolbar -->
<svg class="a" style="left:689px;top:127px" width="16" height="15" viewBox="0 0 16 15"><path d="M4 1L2 9M1 4h5" stroke="#b0b0b0" stroke-width="1.2"/><rect x="5" y="8" width="10" height="6" fill="#f4f4f4" stroke="#b8b8b8"/><path d="M7 12h1M10 12h1M13 12h1" stroke="#999"/></svg>
<svg class="a" style="left:712px;top:127px" width="16" height="15" viewBox="0 0 16 15"><path d="M1 5h4V3l3 3-3 3V7H1Z" fill="#f0c040" stroke="#b08010" stroke-width=".6"/><path d="M10 2v11M10 4h3M10 8h3M10 12h3" stroke="#888" stroke-width="1"/><rect x="12" y="3" width="3" height="2" fill="#e04040"/><rect x="12" y="7" width="3" height="2" fill="#e04040"/><rect x="12" y="11" width="3" height="2" fill="#e04040"/></svg>
<svg class="a" style="left:736px;top:127px" width="15" height="15" viewBox="0 0 15 15"><rect x="1" y="1" width="10" height="10" fill="#e6eef8" stroke="#7a9cc8"/><rect x="4" y="4" width="10" height="10" fill="#e6eef8" stroke="#5a7cb8"/><path d="M6 9h6" stroke="#2a4a88" stroke-width="1.3"/></svg>
<div class="sep" style="left:757px;top:126px;height:17px"></div>
<svg class="a" style="left:766px;top:127px" width="15" height="15" viewBox="0 0 15 15"><path d="M3 1h8l3 3v10H3Z" fill="#fff8e0" stroke="#a08a50"/><path d="M5 6q2-3 5 0M10 9q-2 3-5 0" fill="none" stroke="#d89a1a" stroke-width="1.6"/></svg>
<div class="sep" style="left:788px;top:126px;height:17px"></div>
<svg class="a" style="left:797px;top:127px" width="16" height="15" viewBox="0 0 16 15"><rect x="1" y="4" width="12" height="10" fill="#fffbe8" stroke="#5a7ca8"/><rect x="1" y="4" width="12" height="2.5" fill="#6a9ad8"/><path d="M11 9V1M9 3l2-2 2 2" stroke="#d8a020" stroke-width="1.3" fill="none"/></svg>
<svg class="a" style="left:821px;top:127px" width="16" height="15" viewBox="0 0 16 15"><rect x="1" y="5" width="12" height="9" fill="#e8f0fa" stroke="#5a7ca8"/><rect x="1" y="5" width="12" height="2.5" fill="#6a9ad8"/><path d="M5 11L13 3" stroke="#555" stroke-width="1.5"/><circle cx="13" cy="3" r="1.8" fill="#777"/></svg>
<div class="sep" style="left:843px;top:126px;height:17px"></div>
<svg class="a" style="left:851px;top:127px" width="16" height="16"><use href="#refr"/></svg>
<svg class="a" style="left:883px;top:129px" width="11" height="7"><use href="#menu"/></svg>
<div class="mini" style="left:903px;top:129px"></div>
<div class="maxi" style="left:926px;top:129px"></div>
<!-- table -->
<div class="t n" style="left:494px;top:154px;font-size:12.5px">Name</div>
<div class="t n" style="left:610px;top:154px;font-size:12.5px">Hex</div>
<div class="t n" style="left:728px;top:154px;font-size:12.5px">Decimal</div>
<div class="a" style="left:603px;top:149px;width:1px;height:23px;background:#e6e6e6"></div>
<div class="a" style="left:721px;top:149px;width:1px;height:23px;background:#e6e6e6"></div>
<div class="a" style="left:488px;top:147px;width:443px;height:218px;overflow:hidden">
<div class="a" style="left:0;top:26px;width:443px;height:18px;border-bottom:1px solid #ececec"></div>
<div class="a" style="left:115px;top:26px;width:1px;height:18px;background:#ececec"></div><div class="a" style="left:233px;top:26px;width:1px;height:18px;background:#ececec"></div>
<svg class="a" style="left:22px;top:28px" width="16" height="15"><use href="#bin"/></svg>
<div class="t n" style="left:43px;top:28px;font-size:12.5px">R0</div>
<div class="t mc" style="left:121px;top:29px">00000001</div>
<div class="t mc" style="left:239px;top:29px">1</div>
<div class="a" style="left:0;top:44px;width:443px;height:18px;border-bottom:1px solid #ececec"></div>
<div class="a" style="left:115px;top:44px;width:1px;height:18px;background:#ececec"></div><div class="a" style="left:233px;top:44px;width:1px;height:18px;background:#ececec"></div>
<svg class="a" style="left:22px;top:46px" width="16" height="15"><use href="#bin"/></svg>
<div class="t n" style="left:43px;top:46px;font-size:12.5px">R1</div>
<div class="t mc" style="left:121px;top:47px">100c7d34</div>
<div class="t mc" style="left:239px;top:47px">269253940</div>
<div class="a" style="left:0;top:62px;width:443px;height:18px;border-bottom:1px solid #ececec"></div>
<div class="a" style="left:115px;top:62px;width:1px;height:18px;background:#ececec"></div><div class="a" style="left:233px;top:62px;width:1px;height:18px;background:#ececec"></div>
<svg class="a" style="left:22px;top:64px" width="16" height="15"><use href="#bin"/></svg>
<div class="t n" style="left:43px;top:64px;font-size:12.5px">R2</div>
<div class="t mc" style="left:121px;top:65px">100c7d3c</div>
<div class="t mc" style="left:239px;top:65px">269253948</div>
<div class="a" style="left:0;top:80px;width:443px;height:18px;border-bottom:1px solid #ececec"></div>
<div class="a" style="left:115px;top:80px;width:1px;height:18px;background:#ececec"></div><div class="a" style="left:233px;top:80px;width:1px;height:18px;background:#ececec"></div>
<svg class="a" style="left:22px;top:82px" width="16" height="15"><use href="#bin"/></svg>
<div class="t n" style="left:43px;top:82px;font-size:12.5px">R3</div>
<div class="t mc" style="left:121px;top:83px">100cafac</div>
<div class="t mc" style="left:239px;top:83px">269266860</div>
<div class="a" style="left:0;top:98px;width:443px;height:18px;border-bottom:1px solid #ececec"></div>
<div class="a" style="left:115px;top:98px;width:1px;height:18px;background:#ececec"></div><div class="a" style="left:233px;top:98px;width:1px;height:18px;background:#ececec"></div>
<svg class="a" style="left:22px;top:100px" width="16" height="15"><use href="#bin"/></svg>
<div class="t n" style="left:43px;top:100px;font-size:12.5px">R4</div>
<div class="t mc" style="left:121px;top:101px">00000001</div>
<div class="t mc" style="left:239px;top:101px">1</div>
<div class="a" style="left:0;top:116px;width:443px;height:18px;border-bottom:1px solid #ececec"></div>
<div class="a" style="left:115px;top:116px;width:1px;height:18px;background:#ececec"></div><div class="a" style="left:233px;top:116px;width:1px;height:18px;background:#ececec"></div>
<svg class="a" style="left:22px;top:118px" width="16" height="15"><use href="#bin"/></svg>
<div class="t n" style="left:43px;top:118px;font-size:12.5px">R5</div>
<div class="t mc" style="left:121px;top:119px">100c7d34</div>
<div class="t mc" style="left:239px;top:119px">269253940</div>
<div class="a" style="left:0;top:134px;width:443px;height:18px;border-bottom:1px solid #ececec"></div>
<div class="a" style="left:115px;top:134px;width:1px;height:18px;background:#ececec"></div><div class="a" style="left:233px;top:134px;width:1px;height:18px;background:#ececec"></div>
<svg class="a" style="left:22px;top:136px" width="16" height="15"><use href="#bin"/></svg>
<div class="t n" style="left:43px;top:136px;font-size:12.5px">R6</div>
<div class="t mc" style="left:121px;top:137px">100c7d3c</div>
<div class="t mc" style="left:239px;top:137px">269253948</div>
<div class="a" style="left:0;top:152px;width:443px;height:18px;background:#d9d9d9;border-bottom:1px solid #ececec"></div>
<div class="a" style="left:115px;top:152px;width:1px;height:18px;background:#ececec"></div><div class="a" style="left:233px;top:152px;width:1px;height:18px;background:#ececec"></div>
<svg class="a" style="left:22px;top:154px" width="16" height="15"><use href="#bin"/></svg>
<div class="t n" style="left:43px;top:154px;font-size:12.5px">R7</div>
<div class="t mc" style="left:121px;top:155px">0108f558</div>
<div class="t mc" style="left:239px;top:155px">17364312</div>
<div class="a" style="left:0;top:170px;width:443px;height:18px;border-bottom:1px solid #ececec"></div>
<div class="a" style="left:115px;top:170px;width:1px;height:18px;background:#ececec"></div><div class="a" style="left:233px;top:170px;width:1px;height:18px;background:#ececec"></div>
<svg class="a" style="left:22px;top:172px" width="16" height="15"><use href="#bin"/></svg>
<div class="t n" style="left:43px;top:172px;font-size:12.5px">R8</div>
<div class="t mc" style="left:121px;top:173px">81057000</div>
<div class="t mc" style="left:239px;top:173px">2164617216</div>
<div class="a" style="left:0;top:188px;width:443px;height:18px;border-bottom:1px solid #ececec"></div>
<div class="a" style="left:115px;top:188px;width:1px;height:18px;background:#ececec"></div><div class="a" style="left:233px;top:188px;width:1px;height:18px;background:#ececec"></div>
<svg class="a" style="left:22px;top:190px" width="16" height="15"><use href="#bin"/></svg>
<div class="t n" style="left:43px;top:190px;font-size:12.5px">R9</div>
<div class="t mc" style="left:121px;top:191px">100c7dcc</div>
<div class="t mc" style="left:239px;top:191px">269254092</div>
<div class="a" style="left:0;top:206px;width:443px;height:18px;border-bottom:1px solid #ececec"></div>
<div class="a" style="left:115px;top:206px;width:1px;height:18px;background:#ececec"></div><div class="a" style="left:233px;top:206px;width:1px;height:18px;background:#ececec"></div>
<svg class="a" style="left:22px;top:208px" width="16" height="15"><use href="#bin"/></svg>
<div class="t n" style="left:43px;top:208px;font-size:12.5px">R10</div>
<div class="t mc" style="left:121px;top:209px">0108bd4c</div>
<div class="t mc" style="left:239px;top:209px">17349964</div>
</div>
<!-- v scrollbar -->
<div class="a" style="left:932px;top:149px;width:16px;height:216px;background:#f0f0f0"></div>
<svg class="a" style="left:934px;top:154px" width="10" height="8" viewBox="0 0 10 8"><path d="M1.5 6L5 2.5L8.5 6" fill="none" stroke="#505050" stroke-width="1.8"/></svg>
<div class="a" style="left:932px;top:166px;width:15px;height:75px;background:#cdcdcd"></div>
<svg class="a" style="left:934px;top:350px" width="10" height="8" viewBox="0 0 10 8"><path d="M1.5 2L5 5.5L8.5 2" fill="none" stroke="#505050" stroke-width="1.8"/></svg>
<!-- h scrollbar -->
<div class="a" style="left:488px;top:365px;width:443px;height:21px;background:#f0f0f0"></div>
<svg class="a" style="left:491px;top:368px" width="8" height="10" viewBox="0 0 8 10"><path d="M6 1.5L2.5 5L6 8.5" fill="none" stroke="#505050" stroke-width="1.8"/></svg>
<div class="a" style="left:505px;top:365px;width:202px;height:15px;background:#cdcdcd"></div>
<svg class="a" style="left:919px;top:368px" width="8" height="10" viewBox="0 0 8 10"><path d="M2 1.5L5.5 5L2 8.5" fill="none" stroke="#505050" stroke-width="1.8"/></svg>
<!-- details -->
<div class="a" style="left:488px;top:386px;width:443px;height:56px;background:#fff"></div>
<div class="t" style="left:490px;top:387px;font-size:12.5px;font-weight:bold;transform:scaleX(.95)">Hex:</div>
<div class="t mc" style="left:519px;top:387px">0108f558</div><div class="t" style="left:575px;top:387px;font-size:12.5px">,</div>
<div class="t" style="left:582px;top:387px;font-size:12.5px;font-weight:bold;transform:scaleX(.91)">Dec:</div>
<div class="t mc" style="left:609px;top:387px">17364312</div><div class="t" style="left:665px;top:387px;font-size:12.5px">,</div>
<div class="t" style="left:671px;top:387px;font-size:12.5px;font-weight:bold;transform:scaleX(.92)">Oct:</div>
<div class="t mc" style="left:697px;top:387px">0102172530</div>
<div class="t" style="left:490px;top:402px;font-size:12.5px;font-weight:bold;transform:scaleX(.9)">Bin:</div>
<div class="t mc" style="left:514px;top:402px">0000,0001,0000,1000,1111,0101,0101,1000</div>
<div class="t" style="left:490px;top:417px;font-size:12.5px;font-weight:bold;transform:scaleX(.9)">Size:</div>
<div class="t" style="left:519px;top:417px;font-size:12.5px;transform:scaleX(.94)">4 bytes, readable, writable</div>
<div class="a" style="left:931px;top:386px;width:16px;height:56px;background:#f0f0f0"></div>
<svg class="a" style="left:934px;top:392px" width="10" height="8" viewBox="0 0 10 8"><path d="M1.5 6L5 2.5L8.5 6" fill="none" stroke="#505050" stroke-width="1.8"/></svg>
<div class="a" style="left:932px;top:403px;width:15px;height:19px;background:#cdcdcd"></div>
<svg class="a" style="left:934px;top:428px" width="10" height="8" viewBox="0 0 10 8"><path d="M1.5 2L5 5.5L8.5 2" fill="none" stroke="#505050" stroke-width="1.8"/></svg>
<div class="a" style="left:488px;top:442px;width:459px;height:15px;background:#f0f0f0"></div>
<svg class="a" style="left:491px;top:444px" width="8" height="10" viewBox="0 0 8 10"><path d="M6 1.5L2.5 5L6 8.5" fill="none" stroke="#bcbcbc" stroke-width="1.5"/></svg>
<svg class="a" style="left:919px;top:444px" width="8" height="10" viewBox="0 0 8 10"><path d="M2 1.5L5.5 5L2 8.5" fill="none" stroke="#bcbcbc" stroke-width="1.5"/></svg>
<!-- ===== EDITOR PANEL ===== -->
<svg class="a" style="left:10px;top:470px" width="17" height="16" viewBox="0 0 17 16"><path d="M4 9L9 4L15 10L10 15Z" fill="#f5c540" stroke="#a06a10" stroke-width="1"/><rect x="1" y="2" width="6" height="5" rx="1" fill="#e0b030" stroke="#7a5a10" stroke-width=".8"/><circle cx="9" cy="4.5" r="2.5" fill="#fff" stroke="#555" stroke-width="1"/></svg>
<div class="t" style="left:30px;top:472px;font-size:12.5px">build</div>
<svg class="a" style="left:86px;top:472px" width="17" height="12" viewBox="0 0 17 12"><path d="M1 2h4M7 2h3M12 2h4M1 6h3M6 6h5M13 6h3M1 10h15" stroke="#3a5aa8" stroke-width="1.6"/></svg>
<div class="t n" style="left:107px;top:472px;font-size:12.5px">Disassembly</div>
<div class="a" style="left:197px;top:465px;width:86px;height:26px;background:#fff;border:1px solid #c4c4c4;border-bottom:none;border-radius:6px 6px 0 0"></div>
<svg class="a" style="left:204px;top:471px" width="11" height="14" viewBox="0 0 11 14"><path d="M0.5 0.5h7l3 3v10h-10Z" fill="#f4f8fc" stroke="#a08850"/><text x="1.5" y="11.5" font-family="Liberation Sans" font-weight="bold" font-size="8.5" fill="#2a5aa8">.c</text></svg>
<div class="t n" style="left:220px;top:472px;font-size:12.5px">Sieve.c</div>
<svg class="a" style="left:263px;top:473px" width="12" height="12"><use href="#xclose"/></svg>
<div class="mini" style="left:433px;top:473px"></div>
<div class="maxi" style="left:456px;top:473px"></div>
<!-- ruler -->
<div class="a" style="left:8px;top:493px;width:12px;height:196px;background:repeating-conic-gradient(#3d8ee8 0 25%,#b7d6f8 0 50%) 0 0/2px 2px"></div>
<div class="a" style="left:41px;top:491px;width:1px;height:199px;background:#f2f2f2"></div>
<div class="a" style="left:42px;top:508px;width:406px;height:15px;background:#e8f2fe"></div>
<svg class="a" style="left:7px;top:510px" width="10" height="10" viewBox="0 0 10 10"><path d="M1 3.5h4V1l4.5 4L5 9V6.5H1Z" fill="#7ab0e8" stroke="#2a6ac0" stroke-width=".8"/></svg>
<div class="a" style="left:44px;top:509px;width:7px;height:14px;background:#c8e6c0;border-left:1px solid #000"></div>

<div class="t mc" style="left:20px;top:495px;color:#787878">593</div>
<div class="t mc" style="left:44px;top:495px;white-space:pre;color:#000"><b style="color:#7f0055">int</b> <b>main</b>()</div>
<div class="t mc" style="left:20px;top:510px;color:#787878">594</div>
<div class="t mc" style="left:44px;top:510px;white-space:pre;color:#000">{</div>
<div class="t mc" style="left:20px;top:525px;color:#787878">595</div>
<div class="t mc" style="left:44px;top:525px;white-space:pre;color:#000">    <b style="color:#7f0055">int</b> j;</div>
<div class="t mc" style="left:20px;top:540px;color:#787878">596</div>
<div class="t mc" style="left:20px;top:555px;color:#787878">597</div>
<div class="t mc" style="left:44px;top:555px;white-space:pre;color:#000">    <b style="color:#7f0055">int</b> <b>sieve</b>();</div>
<div class="t mc" style="left:20px;top:570px;color:#787878">598</div>
<div class="t mc" style="left:20px;top:585px;color:#787878">599</div>
<div class="t mc" style="left:44px;top:585px;white-space:pre;color:#000">    vtripplearray[0][0][0] = 1;</div>
<div class="t mc" style="left:20px;top:600px;color:#787878">600</div>
<div class="t mc" style="left:44px;top:600px;white-space:pre;color:#000">    vtripplearray[1][0][0] = 2;</div>
<div class="t mc" style="left:20px;top:615px;color:#787878">601</div>
<div class="t mc" style="left:44px;top:615px;white-space:pre;color:#000">    vtripplearray[0][1][0] = 3;</div>
<div class="t mc" style="left:20px;top:630px;color:#787878">602</div>
<div class="t mc" style="left:44px;top:630px;white-space:pre;color:#000">    vtripplearray[0][0][1] = 4;</div>
<div class="t mc" style="left:20px;top:645px;color:#787878">603</div>
<div class="t mc" style="left:20px;top:660px;color:#787878">604</div>
<div class="t mc" style="left:44px;top:660px;white-space:pre;color:#000">    <b style="color:#7f0055">while</b> ( TRUE )</div>
<div class="t mc" style="left:20px;top:675px;color:#787878">605</div>
<div class="t mc" style="left:44px;top:675px;white-space:pre;color:#000">    {</div>
<div class="a" style="left:449px;top:491px;width:16px;height:199px;background:#f0f0f0"></div>
<svg class="a" style="left:452px;top:498px" width="10" height="8" viewBox="0 0 10 8"><path d="M1.5 6L5 2.5L8.5 6" fill="none" stroke="#505050" stroke-width="1.8"/></svg>
<div class="a" style="left:449px;top:629px;width:15px;height:17px;background:#cdcdcd"></div>
<svg class="a" style="left:452px;top:677px" width="10" height="8" viewBox="0 0 10 8"><path d="M1.5 2L5 5.5L8.5 2" fill="none" stroke="#505050" stroke-width="1.8"/></svg>
<div class="a" style="left:465px;top:491px;width:14px;height:216px;background:#f7f7f7"></div>
<div class="a" style="left:467px;top:636px;width:9px;height:5px;border:1px solid #b8d8a0;background:#f4faf0"></div>
<div class="a" style="left:41px;top:690px;width:424px;height:16px;background:#f0f0f0"></div>
<svg class="a" style="left:46px;top:693px" width="8" height="10" viewBox="0 0 8 10"><path d="M6 1.5L2.5 5L6 8.5" fill="none" stroke="#bcbcbc" stroke-width="1.5"/></svg>
<svg class="a" style="left:436px;top:693px" width="8" height="10" viewBox="0 0 8 10"><path d="M2 1.5L5.5 5L2 8.5" fill="none" stroke="#bcbcbc" stroke-width="1.5"/></svg>
<!-- ===== BREAKPOINTS PANEL ===== -->
<svg class="a" style="left:491px;top:472px" width="13" height="15" viewBox="0 0 13 15"><rect x="0.5" y="0.5" width="5" height="5" fill="#e4eef8" stroke="#6a9ad0"/><rect x="0.5" y="9" width="5" height="5" fill="#e4eef8" stroke="#6a9ad0"/><path d="M7 2.5h5M7 11.5h5" stroke="#8ab0d8" stroke-width="1"/><rect x="5.5" y="6" width="2" height="2" fill="none" stroke="#6a9ad0" stroke-width=".8"/><path d="M9 7h3" stroke="#8ab0d8" stroke-width="1"/></svg>
<div class="t" style="left:510px;top:472px;font-size:12.5px;color:#8a8a8a">Outline</div>
<div class="tabsel" style="left:555px;top:466px;width:112px"></div>
<svg class="a" style="left:559px;top:471px" width="16" height="14" viewBox="0 0 16 14"><circle cx="5" cy="5" r="3.8" fill="#6a8ab8" stroke="#2a4a80" stroke-width="1"/><circle cx="11" cy="9.5" r="3.8" fill="#6a9ad0" stroke="#2a4a80" stroke-width="1"/></svg>
<div class="t n" style="left:579px;top:472px;font-size:12.5px">Breakpoints</div>
<svg class="a" style="left:648px;top:473px" width="12" height="12"><use href="#xclose"/></svg>
<svg class="a" style="left:683px;top:471px" width="15" height="15" viewBox="0 0 15 15"><path d="M2.5 2.5L12.5 12.5M12.5 2.5L2.5 12.5" stroke="#6e6e6e" stroke-width="3.8" stroke-linecap="round"/><path d="M2.5 2.5L12.5 12.5M12.5 2.5L2.5 12.5" stroke="#8e8e8e" stroke-width="2" stroke-linecap="round"/></svg>
<svg class="a" style="left:705px;top:469px" width="18" height="18" viewBox="0 0 18 18"><path d="M2.5 2.5L9.5 9.5M9.5 2.5L2.5 9.5" stroke="#8a8a8a" stroke-width="3.2" stroke-linecap="round"/><path d="M2.5 2.5L9.5 9.5M9.5 2.5L2.5 9.5" stroke="#d0d0d0" stroke-width="1.4" stroke-linecap="round"/><path d="M7 7.5L15 15.5M15 7.5L7 15.5" stroke="#6e6e6e" stroke-width="3.6" stroke-linecap="round"/><path d="M7 7.5L15 15.5M15 7.5L7 15.5" stroke="#8e8e8e" stroke-width="1.8" stroke-linecap="round"/></svg>
<svg class="a" style="left:727px;top:470px" width="17" height="16"><use href="#proc2"/></svg>
<svg class="a" style="left:751px;top:470px" width="17" height="16" viewBox="0 0 17 16"><path d="M6 1h10v14H6Z" fill="#fff8e0" stroke="#a08a50"/><path d="M9 5h5M9 8h5M9 11h5" stroke="#8ab" stroke-width=".8"/><path d="M1 6h5V3l5 5-5 5V10H1Z" fill="#f5c540" stroke="#b08010" stroke-width=".8"/></svg>
<svg class="a" style="left:776px;top:471px" width="14" height="14" viewBox="0 0 14 14"><circle cx="7" cy="7" r="3.8" fill="#cfe0f0" stroke="#3a6aa8" stroke-width="1.4"/><path d="M1 1L13 13" stroke="#2a5a98" stroke-width="1.3"/></svg>
<div class="sep" style="left:796px;top:470px;height:17px"></div>
<svg class="a" style="left:807px;top:471px" width="14" height="14" viewBox="0 0 14 14"><rect x="0.5" y="0.5" width="10" height="10" fill="#e6eef8" stroke="#7a9cc8"/><rect x="3.5" y="3.5" width="10" height="10" fill="#e6eef8" stroke="#5a7cb8"/><path d="M5.5 8.5h6M8.5 5.5v6" stroke="#2a4a88" stroke-width="1.3"/></svg>
<svg class="a" style="left:830px;top:471px" width="14" height="14" viewBox="0 0 14 14"><rect x="0.5" y="0.5" width="10" height="10" fill="#e6eef8" stroke="#7a9cc8"/><rect x="3.5" y="3.5" width="10" height="10" fill="#e6eef8" stroke="#5a7cb8"/><path d="M5.5 8.5h6" stroke="#2a4a88" stroke-width="1.3"/></svg>
<svg class="a" style="left:851px;top:470px" width="16" height="16"><use href="#link"/></svg>
<svg class="a" style="left:883px;top:474px" width="11" height="7"><use href="#menu"/></svg>
<div class="mini" style="left:903px;top:473px"></div>
<div class="maxi" style="left:926px;top:473px"></div>
<div class="a" style="left:488px;top:511px;width:460px;height:18px;background:#d9d9d9"></div>

<svg class="a" style="left:512px;top:496px" width="14" height="14"><use href="#chk"/></svg>
<svg class="a" style="left:533px;top:494px" width="12" height="16" viewBox="0 0 12 16"><path d="M3.5 4.2H9" stroke="#1e8a3a" stroke-width="1.4"/><path d="M7.4 1.6L10.4 4.2L7.4 6.8" fill="none" stroke="#1e8a3a" stroke-width="1.4"/><circle cx="5.2" cy="10.8" r="3.2" fill="#8cb6e2" stroke="#2a5080" stroke-width="1"/><path d="M3.4 10.6h3.6" stroke="#b8d4f0" stroke-width=".8"/></svg>
<div class="t" style="left:549px;top:496px;font-size:12.5px;transform:scaleX(0.9550)">Sieve.c [function: func3] [type: Software]</div>
<svg class="a" style="left:512px;top:514px" width="14" height="14"><use href="#chk"/></svg>
<svg class="a" style="left:533px;top:512px" width="12" height="16" viewBox="0 0 12 16"><path d="M3.5 4.2H9" stroke="#1e8a3a" stroke-width="1.4"/><path d="M7.4 1.6L10.4 4.2L7.4 6.8" fill="none" stroke="#1e8a3a" stroke-width="1.4"/><rect x="2.4" y="7.2" width="5.8" height="7.6" rx="1.2" fill="#1e2c44"/><path d="M1.6 9h1M1.6 11h1M1.6 13h1M8 9h1M8 11h1M8 13h1" stroke="#1e2c44" stroke-width="1"/><rect x="4" y="8.6" width="2.6" height="4.8" fill="#8cc0e8"/></svg>
<div class="t" style="left:549px;top:514px;font-size:12.5px;transform:scaleX(0.9603)">Sieve.c [function: main] [type: Hardware]</div>
<svg class="a" style="left:512px;top:532px" width="14" height="14"><use href="#chk"/></svg>
<svg class="a" style="left:533px;top:530px" width="12" height="16" viewBox="0 0 12 16"><path d="M3.5 4.2H9" stroke="#1e8a3a" stroke-width="1.4"/><path d="M7.4 1.6L10.4 4.2L7.4 6.8" fill="none" stroke="#1e8a3a" stroke-width="1.4"/><circle cx="5.2" cy="10.8" r="3.2" fill="#8cb6e2" stroke="#2a5080" stroke-width="1"/><path d="M3.4 10.6h3.6" stroke="#b8d4f0" stroke-width=".8"/></svg>
<div class="t" style="left:549px;top:532px;font-size:12.5px;transform:scaleX(0.9430)">Sieve.c [function: sieve] [type: Software]</div>
<svg class="a" style="left:512px;top:550px" width="14" height="14"><use href="#chk"/></svg>
<svg class="a" style="left:529px;top:548px" width="15" height="16" viewBox="0 0 15 16"><path d="M1.6 14.4L3.2 10.2L11.6 1.8Q13.2 1.2 13.8 2.6Q14.2 3.8 13 4.6L4.8 13Z" fill="#f2c27a" stroke="#b07a30" stroke-width=".9"/><path d="M4 11.5L12 3.4" stroke="#fde4b0" stroke-width="1"/><path d="M1.4 14.6L2.6 12.2L4 13.4Z" fill="#1a2a6a"/></svg>
<div class="t" style="left:552px;top:550px;font-size:12.5px;transform:scaleX(0.9545)">[expression: 'vtripplearray'] [type: Hardware]</div>
<div class="a" style="left:488px;top:636px;width:460px;height:70px;background:#f0f0f0"></div>
<div class="t n" style="left:493px;top:647px;font-size:12.5px">No scope specified.</div>
<div class="a" style="left:493px;top:666px;width:450px;height:35px;background:#fff"></div>
<!-- ===== CONSOLE PANEL ===== -->
<div class="tabsel" style="left:5px;top:713px;width:94px"></div>
<svg class="a" style="left:11px;top:719px" width="15" height="15"><use href="#mon"/></svg>
<div class="t n" style="left:30px;top:720px;font-size:12.5px">Console</div>
<svg class="a" style="left:80px;top:722px" width="12" height="12"><use href="#xclose"/></svg>
<svg class="a" style="left:103px;top:719px" width="15" height="16" viewBox="0 0 15 16"><rect x="3" y="2" width="11" height="13" fill="#f2f2f2" stroke="#a8a8a8"/><rect x="6" y="1" width="5" height="3" fill="#c0c0c0"/><path d="M1 9l3 3 5-6" stroke="#7aa8d8" stroke-width="1.8" fill="none"/><path d="M7 8h5M7 11h5" stroke="#b0b0b0"/></svg>
<div class="t n" style="left:123px;top:720px;font-size:12.5px;color:#8a8a8a">Tasks</div>
<svg class="a" style="left:160px;top:718px" width="15" height="17" viewBox="0 0 15 17"><rect x="3" y="1" width="11" height="15" fill="#f6f6f6" stroke="#c0c0c0"/><rect x="1" y="2" width="6" height="7" fill="#e8a8a8"/><path d="M2 16L5.5 9L9 16Z" fill="#f0c860" stroke="#c09030" stroke-width=".6"/></svg>
<div class="t n" style="left:181px;top:720px;font-size:12.5px;color:#8a8a8a">Problems</div>
<svg class="a" style="left:242px;top:719px" width="15" height="15" viewBox="0 0 15 15"><circle cx="7.5" cy="7.5" r="7" fill="#b8cce0" stroke="#a0b4c8"/><path d="M5.5 4L11 7.5L5.5 11Z" fill="#fff"/></svg>
<div class="t n" style="left:261px;top:720px;font-size:12.5px;color:#8a8a8a">Executables</div>
<!-- console toolbar -->
<svg class="a" style="left:602px;top:718px" width="14" height="16" viewBox="0 0 14 16"><path d="M4.5 1h5v8h3L7 15 1.5 9h3Z" fill="#fbe090" stroke="#c88a10" stroke-width="1.1"/></svg>
<svg class="a" style="left:625px;top:718px" width="14" height="16" viewBox="0 0 14 16"><path d="M4.5 15h5V7h3L7 1 1.5 7h3Z" fill="#fbe090" stroke="#c88a10" stroke-width="1.1"/></svg>
<div class="a" style="left:644px;top:715px;width:23px;height:21px;background:#cce4f7;border:1px solid #99d1ff"></div>
<svg class="a" style="left:647px;top:717px" width="16" height="16"><use href="#link"/></svg>
<div class="sep" style="left:669px;top:718px;height:17px"></div>
<svg class="a" style="left:679px;top:718px" width="16" height="16" viewBox="0 0 16 16"><rect x="1" y="1" width="10" height="14" fill="#f4f4f4" stroke="#888"/><rect x="11" y="1" width="4" height="14" fill="#fff" stroke="#888"/><path d="M12 4h2M12 8h2M12 12h2" stroke="#555"/><rect x="3" y="9" width="6" height="5" fill="#6a8ab0"/></svg>
<svg class="a" style="left:701px;top:718px" width="16" height="16" viewBox="0 0 16 16"><rect x="1" y="1" width="10" height="14" fill="#f4f4f4" stroke="#888"/><rect x="11" y="1" width="4" height="14" fill="#fff" stroke="#888"/><path d="M12 4h2M12 8h2M12 12h2" stroke="#555"/><rect x="2.5" y="9" width="7" height="5" fill="#e8b030" stroke="#8a6010" stroke-width=".6"/><path d="M4 9V7q2-3 4 0v2" stroke="#8a6010" fill="none"/></svg>
<svg class="a" style="left:726px;top:720px" width="13" height="11" viewBox="0 0 13 11"><path d="M1 1.5h11M1 4.5h8M1 7.5h11" stroke="#a8bcd8" stroke-width="1"/></svg>
<svg class="a" style="left:748px;top:718px" width="16" height="16" viewBox="0 0 16 16"><path d="M1 1h8l3 3v11H1Z" fill="#f8f8f8" stroke="#888"/><path d="M3 5h6M3 8h6M3 11h4" stroke="#999"/><path d="M9 9l6 6M15 9l-6 6" stroke="#666" stroke-width="2"/></svg>
<div class="sep" style="left:769px;top:718px;height:17px"></div>
<svg class="a" style="left:780px;top:717px" width="15" height="16" viewBox="0 0 15 16"><rect x="1" y="5" width="12" height="10" fill="#e8f0fa" stroke="#5a7ca8"/><rect x="1" y="5" width="12" height="2.5" fill="#3a7ac8"/><path d="M6 11L10 6" stroke="#555" stroke-width="1.3"/><circle cx="11" cy="4" r="3" fill="#2aa040"/></svg>
<svg class="a" style="left:803px;top:719px" width="15" height="15"><use href="#mon"/></svg>
<div class="dd" style="left:824px;top:724px"></div>
<svg class="a" style="left:840px;top:717px" width="17" height="16" viewBox="0 0 17 16"><rect x="1" y="4" width="13" height="11" fill="#fffbe8" stroke="#5a7ca8" stroke-width="1"/><rect x="1" y="4" width="13" height="3" fill="#4a8fd8"/><path d="M13 0.5L14 3L16.5 3.5L14 4.5L13 7L12 4.5L9.5 3.5L12 3Z" fill="#f5c518" stroke="#b8860b" stroke-width=".5"/></svg>
<div class="dd" style="left:862px;top:724px"></div>
<svg class="a" style="left:877px;top:719px" width="15" height="15"><use href="#mon"/></svg>
<div class="mini" style="left:903px;top:721px"></div>
<div class="maxi" style="left:926px;top:721px"></div>
<!-- console content -->
<div class="t n" style="left:8px;top:742px;font-size:12.5px">CDT Build Console [GenericX86]</div>
<div class="a" style="left:8px;top:756px;width:925px;height:1px;background:#a0a0a0"></div>
<div class="t mc" style="left:10px;top:767px;color:#2020ff">08:48:06 Build Finished (took 9s.291ms)</div>
<div class="a" style="left:932px;top:757px;width:16px;height:28px;background:#fcfcfc"></div>
<svg class="a" style="left:935px;top:761px" width="10" height="8" viewBox="0 0 10 8"><path d="M1.5 6L5 2.5L8.5 6" fill="none" stroke="#505050" stroke-width="1.8"/></svg>
<svg class="a" style="left:935px;top:774px" width="10" height="8" viewBox="0 0 10 8"><path d="M1.5 2L5 5.5L8.5 2" fill="none" stroke="#505050" stroke-width="1.8"/></svg>
<div class="a" style="left:8px;top:785px;width:940px;height:17px;background:#f0f0f0"></div>
<svg class="a" style="left:12px;top:789px" width="8" height="10" viewBox="0 0 8 10"><path d="M6 1.5L2.5 5L6 8.5" fill="none" stroke="#bcbcbc" stroke-width="1.5"/></svg>
<svg class="a" style="left:918px;top:789px" width="8" height="10" viewBox="0 0 8 10"><path d="M2 1.5L5.5 5L2 8.5" fill="none" stroke="#bcbcbc" stroke-width="1.5"/></svg>
<!-- ===== STATUS BAR ===== -->
<div class="sep" style="left:219px;top:808px;height:21px;background:#a8acb8"></div>
<div class="t n" style="left:228px;top:812px;font-size:12.5px">Writable</div>
<div class="sep" style="left:323px;top:808px;height:21px;background:#a8acb8"></div>
<div class="t n" style="left:331px;top:812px;font-size:12.5px">Smart Insert</div>
<div class="sep" style="left:421px;top:808px;height:21px;background:#a8acb8"></div>
<div class="t n" style="left:429px;top:812px;font-size:12.5px">594 : 1</div>
<div class="grip" style="left:518px;top:813px;height:17px"></div>
<div class="a" style="left:521px;top:810px;width:131px;height:24px;background:#e6e6e6;border-top:1px solid #a8a8a8;border-left:1px solid #a8a8a8;border-right:1px solid #a0a0a0"></div>
<div class="a" style="left:523px;top:811px;width:41px;height:23px;background:#fffde0;border-right:1px solid #a0a0a0"></div>
<div class="t n" style="left:550px;top:814px;font-size:12.5px">193M of 579M</div>
<div class="a" style="left:651px;top:810px;width:17px;height:24px;background:#eef0f8"></div>
<svg class="a" style="left:652px;top:811px" width="15" height="18" viewBox="0 0 15 18"><rect x="1" y="2" width="13" height="2.5" rx="1" fill="#3a8a9a" stroke="#1a5a6a" stroke-width=".6"/><path d="M2.5 5h10l-1 12h-8Z" fill="#4aa8c0" stroke="#1a5a6a" stroke-width=".8"/><path d="M5 7v8M7.5 7v8M10 7v8" stroke="#1a6a80" stroke-width=".9"/></svg>
<div class="grip" style="left:669px;top:813px;height:17px"></div>
</body></html>
